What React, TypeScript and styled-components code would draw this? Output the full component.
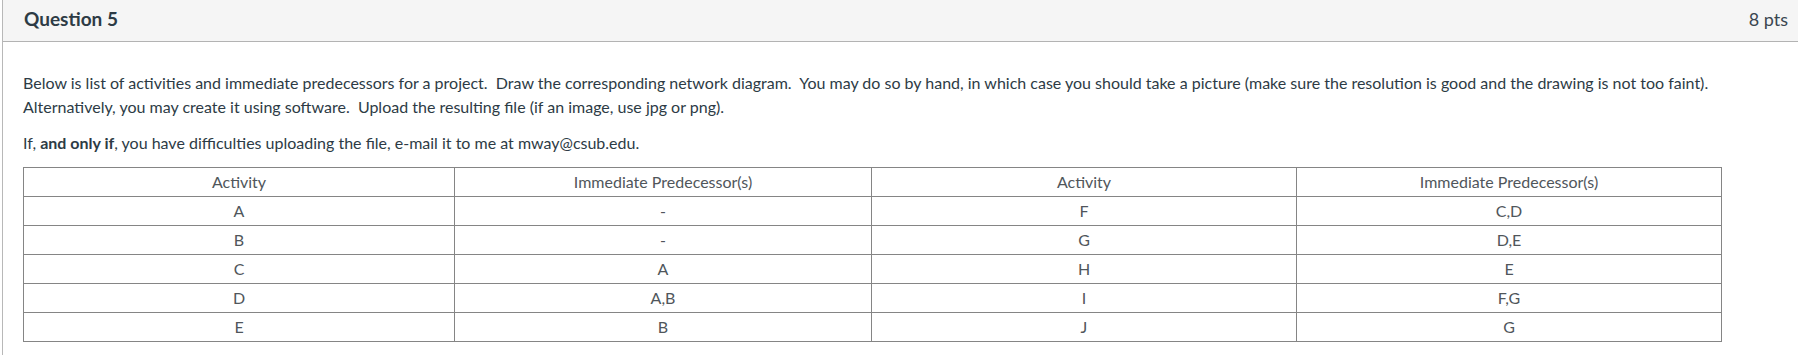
import React from 'react';
import styled, { createGlobalStyle } from 'styled-components';

const GlobalStyle = createGlobalStyle`
  html,
  body {
    margin: 0;
    padding: 0;
    background: #ffffff;
    font-family: Lato, 'Liberation Sans', Arial, sans-serif;
    color: #2d3b45;
  }
`;

const QuestionBox = styled.section`
  margin-left: 2px;
  min-height: 355px;
  border-left: 1px solid #b8b8b8;
  box-sizing: border-box;
`;

const QuestionHeader = styled.header`
  display: flex;
  justify-content: space-between;
  align-items: flex-start;
  height: 42px;
  padding: 7px 10px 0 21px;
  box-sizing: border-box;
  background: #f5f5f5;
  border-bottom: 1px solid #b3b3b3;
`;

const QuestionTitle = styled.h2`
  margin: 0;
  font-size: 19px;
  line-height: 24px;
  font-weight: 700;
  color: #2d3b45;
`;

const Points = styled.span`
  font-size: 18px;
  line-height: 24px;
  color: #3a4650;
`;

const QuestionBody = styled.div`
  padding: 17px 20px 0 20px;
  font-size: 16px;
  line-height: 24px;
  p {
    margin: 12px 0;
  }
`;

const PredTable = styled.table`
  border-collapse: collapse;
  table-layout: fixed;
  width: 1698px;
  margin-top: 12px;
  color: #50565b;
  font-size: 16px;
  line-height: 24px;
`;

const Cell = styled.td`
  border: 1px solid #858585;
  padding: 2px 4px;
  text-align: center;
  font-weight: 400;
`;

const HeadCell = styled(Cell).attrs({ as: 'th' })`
  font-weight: 400;
`;

const rows = [
  ['A', '-', 'F', 'C,D'],
  ['B', '-', 'G', 'D,E'],
  ['C', 'A', 'H', 'E'],
  ['D', 'A,B', 'I', 'F,G'],
  ['E', 'B', 'J', 'G'],
];

const colWidths = [431, 417, 425, 425];

const App: React.FC = () => {
  return (
    <>
      <GlobalStyle />
      <QuestionBox>
        <QuestionHeader>
          <QuestionTitle>Question 5</QuestionTitle>
          <Points>8 pts</Points>
        </QuestionHeader>
        <QuestionBody>
          <p>
            Below is list of activities and immediate predecessors for a project.&nbsp; Draw the
            corresponding network diagram.&nbsp; You may do so by hand, in which case you should take a
            picture (make sure the resolution is good and the drawing is not too faint).&nbsp;
            Alternatively, you may create it using software.&nbsp; Upload the resulting file (if an
            image, use jpg or png).
          </p>
          <p>
            If, <strong>and only if</strong>, you have difficulties uploading the file, e-mail it to me
            at mway@csub.edu.
          </p>
          <PredTable>
            <colgroup>
              {colWidths.map((w, i) => (
                <col key={i} style={{ width: w }} />
              ))}
            </colgroup>
            <thead>
              <tr>
                <HeadCell>Activity</HeadCell>
                <HeadCell>Immediate Predecessor(s)</HeadCell>
                <HeadCell>Activity</HeadCell>
                <HeadCell>Immediate Predecessor(s)</HeadCell>
              </tr>
            </thead>
            <tbody>
              {rows.map((r) => (
                <tr key={r[0]}>
                  {r.map((c, i) => (
                    <Cell key={i}>{c}</Cell>
                  ))}
                </tr>
              ))}
            </tbody>
          </PredTable>
        </QuestionBody>
      </QuestionBox>
    </>
  );
};

export default App;
